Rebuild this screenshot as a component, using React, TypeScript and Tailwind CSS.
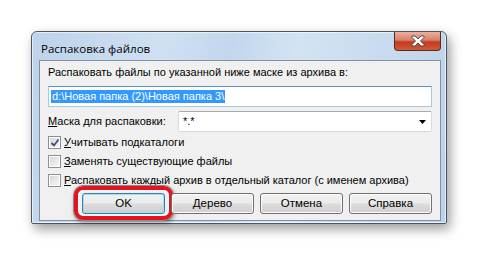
import React from 'react';

function CheckBox({ checked }: { checked?: boolean }) {
  return (
    <span className="relative w-[13px] h-[13px] shrink-0 border border-[#8f8f8f] bg-white p-[1px]">
      <span className="block w-full h-full bg-[linear-gradient(135deg,#d3d6db,#f7f7f7)]" />
      {checked && (
        <svg className="absolute left-[1px] top-[1px]" width="10" height="10" viewBox="0 0 10 10">
          <path d="M1.5 5 L4 7.5 L8.5 1.5" fill="none" stroke="#3b4f7d" strokeWidth="1.8" />
        </svg>
      )}
    </span>
  );
}

function Check({ checked, u, rest }: { checked?: boolean; u: string; rest: string }) {
  return (
    <div className="flex items-center gap-[3px] h-[19px]">
      <CheckBox checked={checked} />
      <span><span className="underline">{u}</span>{rest}</span>
    </div>
  );
}

function Btn({ u, rest, primary }: { u?: string; rest: string; primary?: boolean }) {
  return (
    <button
      className={
        'relative w-[83px] h-[21px] rounded-[3px] border bg-[linear-gradient(#f2f2f2_0%,#ebebeb_48%,#dddddd_52%,#cfcfcf_100%)] leading-none text-[11.5px] ' +
        (primary ? 'border-[#3c7fb1] shadow-[inset_0_0_0_1px_#9fdcf5]' : 'border-[#707070] shadow-[inset_0_0_0_1px_#fcfcfc]')
      }
    >
      {u && <span className="underline">{u}</span>}
      {rest}
    </button>
  );
}

export default function App() {
  return (
    <div className="relative w-[480px] h-[258px] bg-white overflow-hidden font-['Liberation_Sans',Arial,sans-serif] text-[11px] text-black">
      <div className="pl-[31px] pt-[31px]">
        <div className="w-[416px] h-[193px] flex flex-col rounded-t-[6px] rounded-b-[2px] border border-[#4d5660] bg-[linear-gradient(100deg,#bdd3ea_0%,#cfe0f2_30%,#c2d7ed_45%,#d3e3f3_60%,#bcd2ea_100%)] shadow-[3px_5px_12px_rgba(0,0,0,0.4),inset_0_0_0_1px_rgba(255,255,255,0.6)]">
          <div className="h-[28px] flex items-start justify-between pl-[9px] pr-[5px]">
            <span className="mt-[8px] font-['Open_Sans',sans-serif] text-[11.5px] text-black">Распаковка файлов</span>
            <div className="w-[47px] h-[19px] rounded-b-[4px] border border-t-0 border-[#5b2a22] bg-[linear-gradient(#eab0a0_0%,#d9806a_45%,#c33a20_55%,#d05a3c_100%)] flex items-center justify-center">
              <svg width="14" height="12" viewBox="0 0 14 12">
                <path d="M1 1h3l3 3 3-3h3v1.5L9.5 6 13 9.5V11h-3L7 8l-3 3H1V9.5L4.5 6 1 2.5z" fill="#fff" stroke="#3d3d3d" strokeWidth="0.9" />
              </svg>
            </div>
          </div>
          <div className="ml-[7px] mr-[5px] h-[161px] border border-[#83909f] bg-[#f0f0f0] px-[8px] flex flex-col">
            <div className="mt-[5px] h-[13px] leading-[13px]">Распаковать файлы по указанной ниже маске из архива в:</div>
            <div className="mt-[7px] h-[21px] border border-[#a9c8e0] border-t-[#5d92bf] bg-white flex items-center pl-[2px]">
              <span className="bg-[#3399ff] text-white leading-[13px] px-[1px]">d:\Новая папка (2)\Новая папка 3\</span>
            </div>
            <div className="mt-[4px] flex items-center h-[21px]">
              <span className="w-[130px]"><span className="underline">М</span>аска для распаковки:</span>
              <div className="flex-1 h-[21px] border border-[#d9d9d9] border-t-[#ababab] rounded-[2px] bg-white flex items-center justify-between pl-[4px] pr-[5px]">
                <span>*.*</span>
                <svg width="7" height="4" viewBox="0 0 7 4"><path d="M0 0h7L3.5 4z" fill="#000" /></svg>
              </div>
            </div>
            <div className="mt-[1px] flex flex-col">
              <Check checked u="У" rest="читывать подкаталоги" />
              <Check u="З" rest="аменять существующие файлы" />
              <Check u="Р" rest="аспаковать каждый архив в отдельный каталог (с именем архива)" />
            </div>
            <div className="mt-[3px] flex justify-end gap-[6px]">
              <div className="relative">
                <span className="absolute -left-[8px] -right-[8px] -top-[7px] -bottom-[6px] rounded-[9px] border-[4px] border-[#e3141e] shadow-[0_0_0_1px_#8a8a8a,1px_2px_5px_rgba(0,0,0,0.5),inset_0_0_0_1px_#ffffff]" />
                <Btn primary rest="OK" />
              </div>
              <Btn u="Д" rest="ерево" />
              <Btn rest="Отмена" />
              <Btn rest="Справка" />
            </div>
          </div>
        </div>
      </div>
    </div>
  );
}
